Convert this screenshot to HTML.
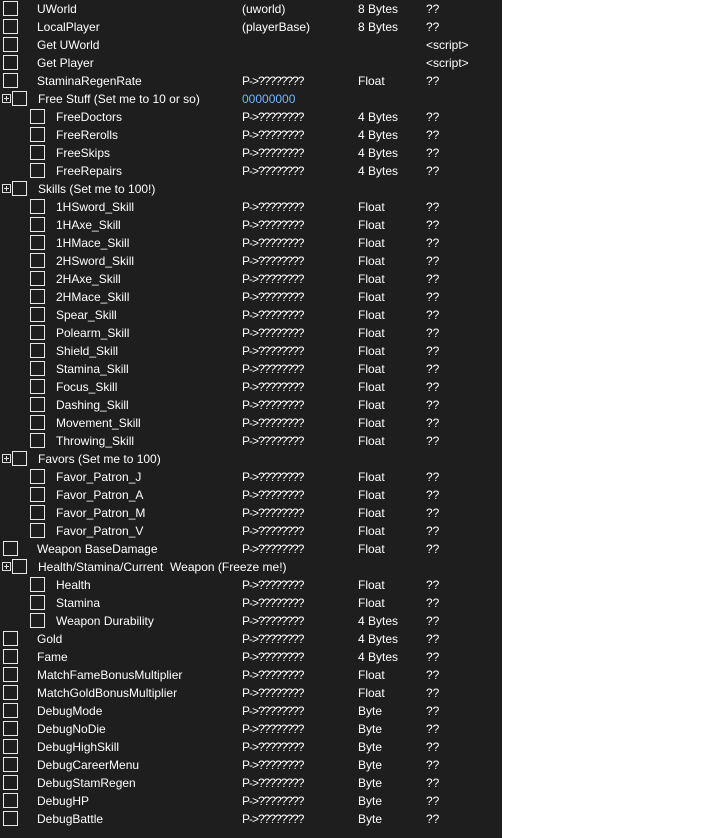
<!DOCTYPE html><html><head><meta charset="utf-8"><style>
body{margin:0;width:720px;height:838px;background:#fff;overflow:hidden;font-family:"Liberation Sans",sans-serif;font-size:12px;color:#fff;position:relative}
#p{position:absolute;left:0;top:0;width:502px;height:838px;background:#1e1e1e}
.r{position:absolute;left:0;width:502px;height:18px}
.cb{position:absolute;top:1px;width:13px;height:13px;border:1px solid #e8e8e8}
.a .cb{left:3px}.c .cb{left:30px}.g .cb{left:12px}
.ex{position:absolute;left:2px;top:4px;width:7px;height:7px;border:1px solid #ddd}
.ex:before{content:"";position:absolute;left:1px;top:3px;width:5px;height:1px;background:#ddd}
.ex:after{content:"";position:absolute;left:3px;top:1px;width:1px;height:5px;background:#ddd}
.t{position:absolute;top:2px;white-space:nowrap;line-height:14px}
.a .n{left:37px}.g .n{left:38px}.c .n{left:56px}
.ad{left:242px}.ty{left:358px}.v{left:426px}
.q{letter-spacing:-1px}
.b{color:#6fb8ff}
</style></head><body><div id="p">
<div class="r a" style="top:0"><div class="cb"></div><span class="t n">UWorld</span><span class="t ad">(uworld)</span><span class="t ty">8 Bytes</span><span class="t v">??</span></div>
<div class="r a" style="top:18px"><div class="cb"></div><span class="t n">LocalPlayer</span><span class="t ad">(playerBase)</span><span class="t ty">8 Bytes</span><span class="t v">??</span></div>
<div class="r a" style="top:36px"><div class="cb"></div><span class="t n">Get UWorld</span><span class="t v">&lt;script&gt;</span></div>
<div class="r a" style="top:54px"><div class="cb"></div><span class="t n">Get Player</span><span class="t v">&lt;script&gt;</span></div>
<div class="r a" style="top:72px"><div class="cb"></div><span class="t n">StaminaRegenRate</span><span class="t ad q">P-&gt;????????</span><span class="t ty">Float</span><span class="t v">??</span></div>
<div class="r g" style="top:90px"><div class="ex"></div><div class="cb"></div><span class="t n">Free Stuff (Set me to 10 or so)</span><span class="t ad b">00000000</span></div>
<div class="r c" style="top:108px"><div class="cb"></div><span class="t n">FreeDoctors</span><span class="t ad q">P-&gt;????????</span><span class="t ty">4 Bytes</span><span class="t v">??</span></div>
<div class="r c" style="top:126px"><div class="cb"></div><span class="t n">FreeRerolls</span><span class="t ad q">P-&gt;????????</span><span class="t ty">4 Bytes</span><span class="t v">??</span></div>
<div class="r c" style="top:144px"><div class="cb"></div><span class="t n">FreeSkips</span><span class="t ad q">P-&gt;????????</span><span class="t ty">4 Bytes</span><span class="t v">??</span></div>
<div class="r c" style="top:162px"><div class="cb"></div><span class="t n">FreeRepairs</span><span class="t ad q">P-&gt;????????</span><span class="t ty">4 Bytes</span><span class="t v">??</span></div>
<div class="r g" style="top:180px"><div class="ex"></div><div class="cb"></div><span class="t n">Skills (Set me to 100!)</span></div>
<div class="r c" style="top:198px"><div class="cb"></div><span class="t n">1HSword_Skill</span><span class="t ad q">P-&gt;????????</span><span class="t ty">Float</span><span class="t v">??</span></div>
<div class="r c" style="top:216px"><div class="cb"></div><span class="t n">1HAxe_Skill</span><span class="t ad q">P-&gt;????????</span><span class="t ty">Float</span><span class="t v">??</span></div>
<div class="r c" style="top:234px"><div class="cb"></div><span class="t n">1HMace_Skill</span><span class="t ad q">P-&gt;????????</span><span class="t ty">Float</span><span class="t v">??</span></div>
<div class="r c" style="top:252px"><div class="cb"></div><span class="t n">2HSword_Skill</span><span class="t ad q">P-&gt;????????</span><span class="t ty">Float</span><span class="t v">??</span></div>
<div class="r c" style="top:270px"><div class="cb"></div><span class="t n">2HAxe_Skill</span><span class="t ad q">P-&gt;????????</span><span class="t ty">Float</span><span class="t v">??</span></div>
<div class="r c" style="top:288px"><div class="cb"></div><span class="t n">2HMace_Skill</span><span class="t ad q">P-&gt;????????</span><span class="t ty">Float</span><span class="t v">??</span></div>
<div class="r c" style="top:306px"><div class="cb"></div><span class="t n">Spear_Skill</span><span class="t ad q">P-&gt;????????</span><span class="t ty">Float</span><span class="t v">??</span></div>
<div class="r c" style="top:324px"><div class="cb"></div><span class="t n">Polearm_Skill</span><span class="t ad q">P-&gt;????????</span><span class="t ty">Float</span><span class="t v">??</span></div>
<div class="r c" style="top:342px"><div class="cb"></div><span class="t n">Shield_Skill</span><span class="t ad q">P-&gt;????????</span><span class="t ty">Float</span><span class="t v">??</span></div>
<div class="r c" style="top:360px"><div class="cb"></div><span class="t n">Stamina_Skill</span><span class="t ad q">P-&gt;????????</span><span class="t ty">Float</span><span class="t v">??</span></div>
<div class="r c" style="top:378px"><div class="cb"></div><span class="t n">Focus_Skill</span><span class="t ad q">P-&gt;????????</span><span class="t ty">Float</span><span class="t v">??</span></div>
<div class="r c" style="top:396px"><div class="cb"></div><span class="t n">Dashing_Skill</span><span class="t ad q">P-&gt;????????</span><span class="t ty">Float</span><span class="t v">??</span></div>
<div class="r c" style="top:414px"><div class="cb"></div><span class="t n">Movement_Skill</span><span class="t ad q">P-&gt;????????</span><span class="t ty">Float</span><span class="t v">??</span></div>
<div class="r c" style="top:432px"><div class="cb"></div><span class="t n">Throwing_Skill</span><span class="t ad q">P-&gt;????????</span><span class="t ty">Float</span><span class="t v">??</span></div>
<div class="r g" style="top:450px"><div class="ex"></div><div class="cb"></div><span class="t n">Favors (Set me to 100)</span></div>
<div class="r c" style="top:468px"><div class="cb"></div><span class="t n">Favor_Patron_J</span><span class="t ad q">P-&gt;????????</span><span class="t ty">Float</span><span class="t v">??</span></div>
<div class="r c" style="top:486px"><div class="cb"></div><span class="t n">Favor_Patron_A</span><span class="t ad q">P-&gt;????????</span><span class="t ty">Float</span><span class="t v">??</span></div>
<div class="r c" style="top:504px"><div class="cb"></div><span class="t n">Favor_Patron_M</span><span class="t ad q">P-&gt;????????</span><span class="t ty">Float</span><span class="t v">??</span></div>
<div class="r c" style="top:522px"><div class="cb"></div><span class="t n">Favor_Patron_V</span><span class="t ad q">P-&gt;????????</span><span class="t ty">Float</span><span class="t v">??</span></div>
<div class="r a" style="top:540px"><div class="cb"></div><span class="t n">Weapon BaseDamage</span><span class="t ad q">P-&gt;????????</span><span class="t ty">Float</span><span class="t v">??</span></div>
<div class="r g" style="top:558px"><div class="ex"></div><div class="cb"></div><span class="t n">Health/Stamina/Current&nbsp; Weapon (Freeze me!)</span></div>
<div class="r c" style="top:576px"><div class="cb"></div><span class="t n">Health</span><span class="t ad q">P-&gt;????????</span><span class="t ty">Float</span><span class="t v">??</span></div>
<div class="r c" style="top:594px"><div class="cb"></div><span class="t n">Stamina</span><span class="t ad q">P-&gt;????????</span><span class="t ty">Float</span><span class="t v">??</span></div>
<div class="r c" style="top:612px"><div class="cb"></div><span class="t n">Weapon Durability</span><span class="t ad q">P-&gt;????????</span><span class="t ty">4 Bytes</span><span class="t v">??</span></div>
<div class="r a" style="top:630px"><div class="cb"></div><span class="t n">Gold</span><span class="t ad q">P-&gt;????????</span><span class="t ty">4 Bytes</span><span class="t v">??</span></div>
<div class="r a" style="top:648px"><div class="cb"></div><span class="t n">Fame</span><span class="t ad q">P-&gt;????????</span><span class="t ty">4 Bytes</span><span class="t v">??</span></div>
<div class="r a" style="top:666px"><div class="cb"></div><span class="t n">MatchFameBonusMultiplier</span><span class="t ad q">P-&gt;????????</span><span class="t ty">Float</span><span class="t v">??</span></div>
<div class="r a" style="top:684px"><div class="cb"></div><span class="t n">MatchGoldBonusMultiplier</span><span class="t ad q">P-&gt;????????</span><span class="t ty">Float</span><span class="t v">??</span></div>
<div class="r a" style="top:702px"><div class="cb"></div><span class="t n">DebugMode</span><span class="t ad q">P-&gt;????????</span><span class="t ty">Byte</span><span class="t v">??</span></div>
<div class="r a" style="top:720px"><div class="cb"></div><span class="t n">DebugNoDie</span><span class="t ad q">P-&gt;????????</span><span class="t ty">Byte</span><span class="t v">??</span></div>
<div class="r a" style="top:738px"><div class="cb"></div><span class="t n">DebugHighSkill</span><span class="t ad q">P-&gt;????????</span><span class="t ty">Byte</span><span class="t v">??</span></div>
<div class="r a" style="top:756px"><div class="cb"></div><span class="t n">DebugCareerMenu</span><span class="t ad q">P-&gt;????????</span><span class="t ty">Byte</span><span class="t v">??</span></div>
<div class="r a" style="top:774px"><div class="cb"></div><span class="t n">DebugStamRegen</span><span class="t ad q">P-&gt;????????</span><span class="t ty">Byte</span><span class="t v">??</span></div>
<div class="r a" style="top:792px"><div class="cb"></div><span class="t n">DebugHP</span><span class="t ad q">P-&gt;????????</span><span class="t ty">Byte</span><span class="t v">??</span></div>
<div class="r a" style="top:810px"><div class="cb"></div><span class="t n">DebugBattle</span><span class="t ad q">P-&gt;????????</span><span class="t ty">Byte</span><span class="t v">??</span></div>
</div></body></html>
